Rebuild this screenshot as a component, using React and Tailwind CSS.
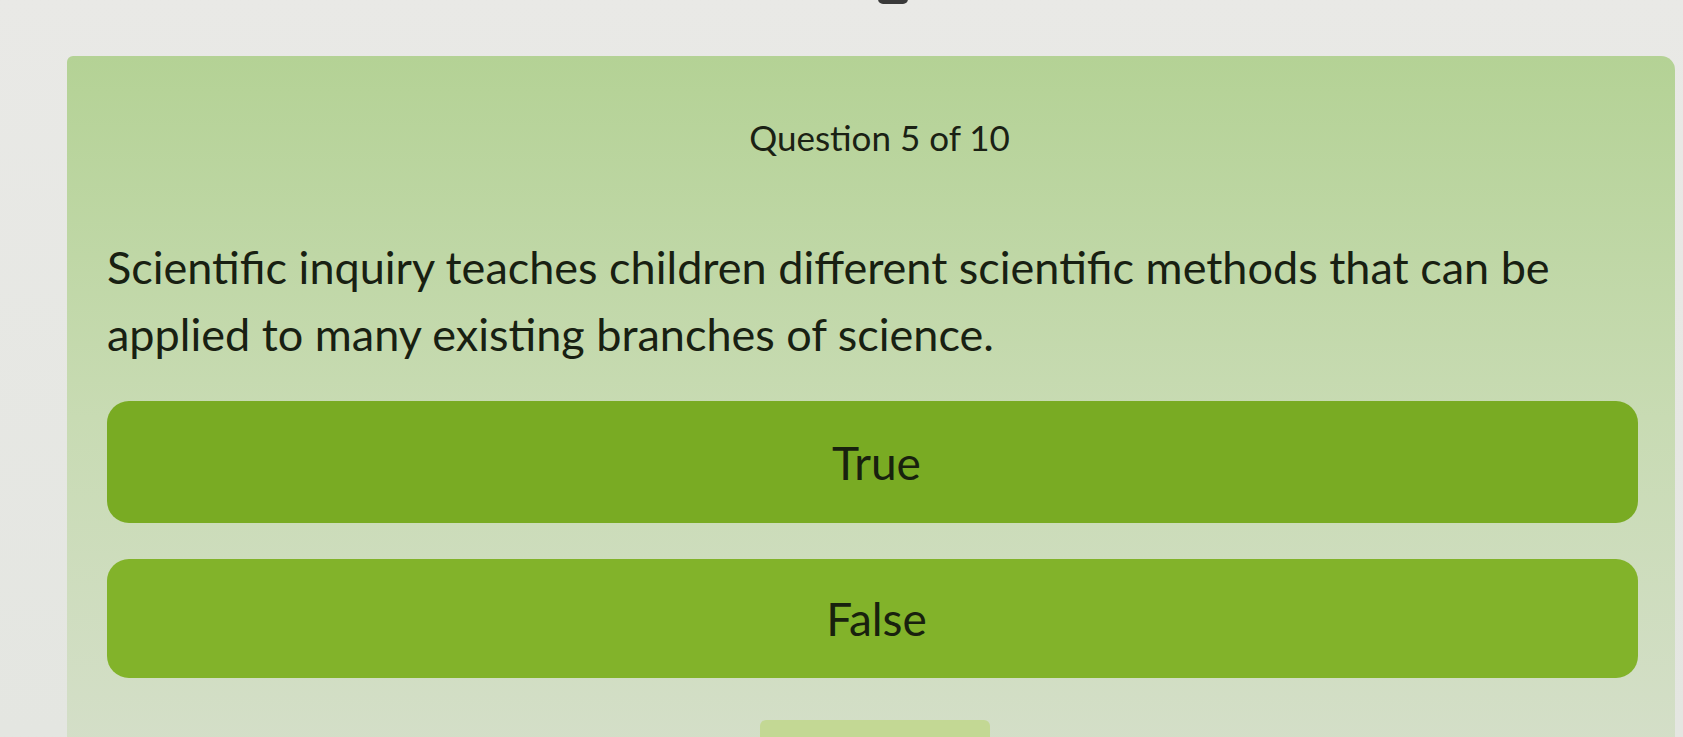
export default function App() {
  return (
    <div
      className="relative h-[737px] w-full overflow-hidden bg-gradient-to-b from-[#e9e9e6] to-[#e4e6e1] pt-[56px] pl-[67px] pr-[8px]"
      style={{ fontFamily: "Lato, 'Open Sans', sans-serif" }}
    >
      <div className="absolute left-[878px] top-[-6px] h-[10px] w-[30px] rounded-full bg-[#3a3a3a]" />
      <div className="h-[720px] rounded-tl-[6px] rounded-tr-[14px] bg-gradient-to-b from-[#b4d295] via-[#c8dbb3] to-[#d5dfca] pt-[61px] pl-[40px] pr-[37px]">
        <div className="pl-[14px] text-center text-[35px] leading-[40px] text-[#1a2114]">
          Question 5 of 10
        </div>
        <p className="mt-[77px] text-[45px] leading-[67px] text-[#182012]">
          Scientific inquiry teaches children different scientific methods that can be applied to many existing branches of science.
        </p>
        <div className="mt-[33px] flex flex-col gap-[36px]">
          <div className="flex h-[122px] items-center justify-center rounded-[22px] bg-[#79ab23] pl-[8px] text-[46px] text-[#18210e]">
            True
          </div>
          <div className="flex h-[119px] items-center justify-center rounded-[22px] bg-[#82b32a] pl-[8px] text-[46px] text-[#18210e]">
            False
          </div>
        </div>
        <div className="ml-[653px] mt-[42px] h-[40px] w-[230px] rounded-[6px] bg-[#c3d894]" />
      </div>
    </div>
  );
}
